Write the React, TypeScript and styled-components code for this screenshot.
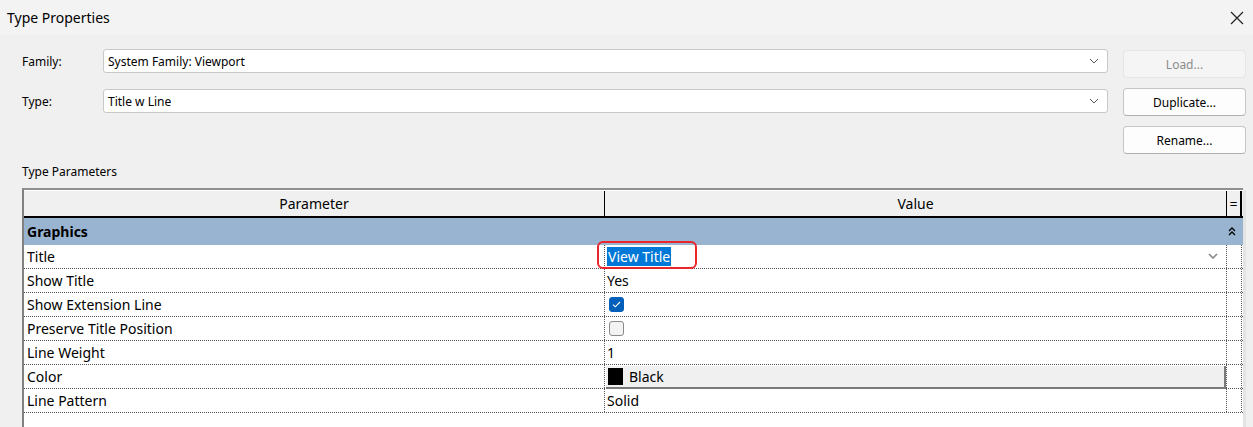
import React from 'react';
import styled, { createGlobalStyle } from 'styled-components';

const Global = createGlobalStyle`
    html, body {
        margin: 0;
        padding: 0;
        background: #f0f0f0;
        font-family: "Noto Sans", "Open Sans", sans-serif;
        color: #000;
    }
    #root {
        height: 427px;
        overflow: hidden;
    }
`;

const Window = styled.div`
    width: 1253px;
    height: 427px;
    display: flex;
    flex-direction: column;
    background: #f0f0f0;
`;

const TitleBar = styled.div`
    height: 35px;
    flex: none;
    display: flex;
    align-items: center;
    justify-content: space-between;
    padding: 0 8px 0 7px;
    background: #f3f3f3;
    font-size: 14px;
`;

const CloseBtn = styled.div`
    width: 16px;
    height: 16px;
    display: flex;
    align-items: center;
    justify-content: center;
`;

const Body = styled.div`
    flex: 1;
    display: flex;
    flex-direction: column;
    padding: 0 7px 0 22px;
    min-height: 0;
`;

const TopArea = styled.div`
    display: flex;
    gap: 15px;
    height: 119px;
    flex: none;
`;

const Fields = styled.div`
    display: flex;
    flex-direction: column;
    gap: 16px;
    padding-top: 14px;
`;

const FieldRow = styled.div`
    display: flex;
    align-items: center;
`;

const Label = styled.div`
    width: 81px;
    font-size: 12px;
`;

const Select = styled.div`
    width: 1005px;
    height: 24px;
    box-sizing: border-box;
    border: 1px solid #c8c8c8;
    border-radius: 3px;
    background: #fff;
    display: flex;
    align-items: center;
    justify-content: space-between;
    padding: 0 8px 0 4px;
    font-size: 12px;
`;

const Buttons = styled.div`
    display: flex;
    flex-direction: column;
    gap: 10px;
    padding-top: 15px;
`;

const Button = styled.div<{ $disabled?: boolean }>`
    width: 123px;
    height: 28px;
    box-sizing: border-box;
    border: 1px solid ${p => (p.$disabled ? '#e6e6e6' : '#c6c6c6')};
    border-bottom-color: ${p => (p.$disabled ? '#e6e6e6' : '#b0b0b0')};
    border-radius: 4px;
    background: ${p => (p.$disabled ? '#f5f5f5' : '#fdfdfd')};
    color: ${p => (p.$disabled ? '#8c8c8c' : '#000')};
    display: flex;
    align-items: center;
    justify-content: center;
    font-size: 12px;
`;

const SectionLabel = styled.div`
    font-size: 12px;
    height: 34px;
    display: flex;
    align-items: center;
    flex: none;
`;

const Table = styled.div`
    width: 1221px;
    flex: 1;
    box-sizing: border-box;
    border-left: 2px solid #808080;
    border-top: 2px solid #909090;
    background: #fff;
    position: relative;
    display: flex;
    flex-direction: column;
    &::after {
        content: '';
        position: absolute;
        top: 0;
        bottom: 0;
        right: -3px;
        width: 3px;
        background: #e4e4e4;
    }
`;

const COLS = '581px 622px 15px';

const HeaderRow = styled.div`
    display: grid;
    grid-template-columns: ${COLS};
    height: 25px;
    border-top: 1px solid #fff;
    border-bottom: 2px solid #000;
    background: #f0f0f0;
    flex: none;
`;

const HeaderCell = styled.div<{ $last?: boolean }>`
    display: flex;
    align-items: center;
    justify-content: center;
    font-size: 14px;
    border-right: ${p => (p.$last ? '2px solid #000' : '1px solid #000')};
    box-sizing: border-box;
`;

const GroupRow = styled.div`
    display: grid;
    grid-template-columns: 1fr 15px;
    height: 27px;
    background: #99b4d1;
    align-items: center;
    font-size: 14px;
    font-weight: 700;
    flex: none;
    padding-left: 3px;
`;

const Row = styled.div`
    display: grid;
    grid-template-columns: ${COLS};
    height: 24px;
    box-sizing: border-box;
    border-bottom: 1px dotted #555;
    flex: none;
    font-size: 14px;
`;

const Cell = styled.div<{ $value?: boolean; $last?: boolean }>`
    display: flex;
    align-items: center;
    box-sizing: border-box;
    padding-left: ${p => (p.$value ? '2px' : p.$last ? '0' : '3px')};
    border-right: 1px dotted #555;
    position: relative;
    min-width: 0;
`;

const Highlight = styled.span`
    background: #0078d7;
    color: #fff;
    padding: 0 1px;
    line-height: 19px;
`;

const Annotation = styled.div`
    position: absolute;
    left: -8px;
    top: -4px;
    width: 100px;
    height: 28px;
    border: 2px solid #e8262b;
    border-radius: 6px;
    box-sizing: border-box;
    pointer-events: none;
`;

const DropChevron = styled.div`
    position: absolute;
    right: 8px;
    top: 8px;
    display: flex;
`;

const Check = styled.div<{ $on?: boolean }>`
    width: 15px;
    height: 15px;
    box-sizing: border-box;
    border-radius: 3px;
    margin-left: 2px;
    background: ${p => (p.$on ? '#005fb8' : '#f3f3f3')};
    border: 1px solid ${p => (p.$on ? '#005fb8' : '#8a8a8a')};
    display: flex;
    align-items: center;
    justify-content: center;
`;

const ColorButton = styled.div`
    flex: 1;
    align-self: stretch;
    margin: 1px 0 -1px -1px;
    background: #f0f0f0;
    border-right: 2px solid #7a7a7a;
    border-bottom: 2px solid #7a7a7a;
    display: flex;
    align-items: center;
    gap: 6px;
    padding-left: 2px;
`;

const Swatch = styled.div`
    width: 15px;
    height: 17px;
    background: #000;
`;

const Filler = styled.div`
    flex: 1;
    display: grid;
    grid-template-columns: ${COLS};
`;

const FillCell = styled.div`
    border-right: none;
`;

type Param = { name: string; value: React.ReactNode };

const rows: Param[] = [
    {
        name: 'Title',
        value: (
            <>
                <Annotation />
                <Highlight>View Title</Highlight>
                <DropChevron>
                    <svg width="10" height="6" viewBox="0 0 10 6">
                        <path d="M1 1 L5 5 L9 1" fill="none" stroke="#888" strokeWidth="1.6" />
                    </svg>
                </DropChevron>
            </>
        ),
    },
    { name: 'Show Title', value: 'Yes' },
    {
        name: 'Show Extension Line',
        value: (
            <Check $on>
                <svg width="9" height="7" viewBox="0 0 9 7">
                    <path d="M1 3.6 L3.3 5.8 L8 1" fill="none" stroke="#fff" strokeWidth="1.1" />
                </svg>
            </Check>
        ),
    },
    { name: 'Preserve Title Position', value: <Check /> },
    { name: 'Line Weight', value: '1' },
    {
        name: 'Color',
        value: (
            <ColorButton>
                <Swatch />
                Black
            </ColorButton>
        ),
    },
    { name: 'Line Pattern', value: 'Solid' },
];

function Chevron() {
    return (
        <svg width="10" height="6" viewBox="0 0 10 6">
            <path d="M1 1 L5 5 L9 1" fill="none" stroke="#555" strokeWidth="1" />
        </svg>
    );
}

export default function App() {
    return (
        <Window>
            <Global />
            <TitleBar>
                Type Properties
                <CloseBtn>
                    <svg width="14" height="14" viewBox="0 0 14 14">
                        <path d="M1 1 L13 13 M13 1 L1 13" stroke="#222" strokeWidth="1.2" />
                    </svg>
                </CloseBtn>
            </TitleBar>
            <Body>
                <TopArea>
                    <Fields>
                        <FieldRow>
                            <Label>Family:</Label>
                            <Select>
                                System Family: Viewport
                                <Chevron />
                            </Select>
                        </FieldRow>
                        <FieldRow>
                            <Label>Type:</Label>
                            <Select>
                                Title w Line
                                <Chevron />
                            </Select>
                        </FieldRow>
                    </Fields>
                    <Buttons>
                        <Button $disabled>Load...</Button>
                        <Button>Duplicate...</Button>
                        <Button>Rename...</Button>
                    </Buttons>
                </TopArea>
                <SectionLabel>Type Parameters</SectionLabel>
                <Table>
                    <HeaderRow>
                        <HeaderCell>Parameter</HeaderCell>
                        <HeaderCell>Value</HeaderCell>
                        <HeaderCell $last>=</HeaderCell>
                    </HeaderRow>
                    <GroupRow>
                        Graphics
                        <svg width="8" height="9" viewBox="0 0 8 9">
                            <path d="M1 4 L4 1 L7 4 M1 8 L4 5 L7 8" fill="none" stroke="#000" strokeWidth="1.3" />
                        </svg>
                    </GroupRow>
                    {rows.map(r => (
                        <Row key={r.name}>
                            <Cell>{r.name}</Cell>
                            <Cell $value>{r.value}</Cell>
                            <Cell $last />
                        </Row>
                    ))}
                    <Filler>
                        <FillCell />
                        <FillCell />
                        <FillCell />
                    </Filler>
                </Table>
            </Body>
        </Window>
    );
}
